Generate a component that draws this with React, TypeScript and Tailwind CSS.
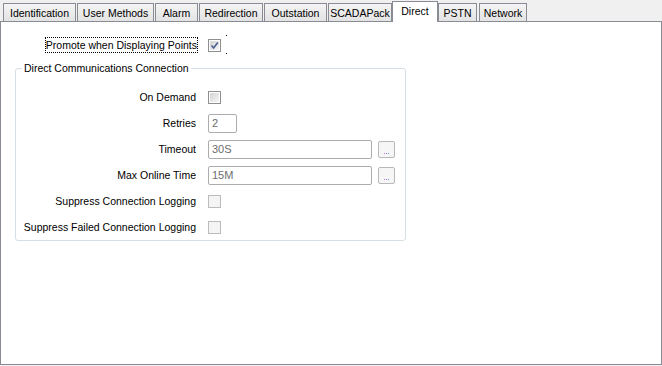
const tabs = [
  { name: "Identification", w: "w-[73px]", ml: "ml-0" },
  { name: "User Methods", w: "w-[77px]", ml: "ml-[1px]" },
  { name: "Alarm", w: "w-[43px]", ml: "ml-[1px]" },
  { name: "Redirection", w: "w-[64px]", ml: "ml-[1px]" },
  { name: "Outstation", w: "w-[63px]", ml: "ml-[1px]" },
  { name: "SCADAPack", w: "w-[64px]", ml: "ml-[1px]" },
  { name: "Direct", w: "w-[46px]", ml: "ml-0", active: true },
  { name: "PSTN", w: "w-[39px]", ml: "ml-0" },
  { name: "Network", w: "w-[48px]", ml: "ml-[2px]" },
];

function Check({ checked, dim }: { checked?: boolean; dim?: boolean }) {
  if (dim) {
    return <span className="block h-[13px] w-[13px] border border-[#bcbcbc] bg-[#f4f4f4]" />;
  }
  return (
    <span className="flex h-[13px] w-[13px] border border-[#8e8f8f] bg-white p-[1px]">
      <span className="relative flex flex-1 items-center justify-center bg-gradient-to-br from-[#d4d4d4] to-[#f6f6f6]">
        {checked && (
          <svg width="9" height="9" viewBox="0 0 9 9" className="absolute">
            <path d="M1.5 4.5 L3.6 7 L7.8 1.5" fill="none" stroke="#4b5f8f" strokeWidth="1.6" />
          </svg>
        )}
      </span>
    </span>
  );
}

function Field({ value, w }: { value: string; w: string }) {
  return (
    <span className={`flex h-[19px] ${w} items-center rounded-[2px] border border-[#acacac] bg-white pl-[3px] text-[11px] text-[#6d6d6d]`}>
      {value}
    </span>
  );
}

function Dots() {
  return (
    <span className="ml-[6px] flex h-[17px] w-[17px] items-end justify-center rounded-[2px] border border-[#b8b8b8] bg-[#f6f6f6] pb-[3px]">
      <span className="flex gap-[1px]">
        <span className="block h-px w-px bg-[#c07ad0]" />
        <span className="block h-px w-px bg-[#8a7bd0]" />
        <span className="block h-px w-px bg-[#6f9ad0]" />
      </span>
    </span>
  );
}

function Row({ label, children }: { label: string; children: React.ReactNode }) {
  return (
    <div className="flex h-[26px] items-center">
      <span className="w-[180px] whitespace-nowrap text-right">{label}</span>
      <div className="ml-[12px] flex items-center">{children}</div>
    </div>
  );
}

export default function App() {
  return (
    <div className="h-[366px] w-[662px] bg-[#f0f0f0] text-[10.5px] leading-[14px] text-black [font-family:'Liberation_Sans',Arial,sans-serif]">
      <div className="flex h-[21px] items-end pl-[3px]">
        {tabs.map((t) =>
          t.active ? (
            <div
              key={t.name}
              className={`relative z-10 -mb-px flex h-[21px] ${t.w} ${t.ml} items-start justify-center border border-b-0 border-[#898c95] bg-white pt-[2px]`}
            >
              {t.name}
            </div>
          ) : (
            <div
              key={t.name}
              className={`flex h-[18px] ${t.w} ${t.ml} items-center justify-center whitespace-nowrap border border-b-0 border-[#898c95] bg-gradient-to-b from-[#f4f4f4] to-[#e3e3e3]`}
            >
              {t.name}
            </div>
          )
        )}
      </div>

      <div className="h-[344px] border border-[#898c95] bg-white">
        <div className="mt-[15px] flex h-[16px] items-center">
          <div className="flex w-[197px] justify-end">
            <span className="whitespace-nowrap border border-dotted border-black">Promote when Displaying Points</span>
          </div>
          <span className="ml-[10px]">
            <Check checked />
          </span>
          <span className="-mt-[2px] ml-[5px] flex h-[19px] flex-col justify-between">
            <span className="block h-px w-px bg-black" />
            <span className="block h-px w-px bg-black" />
          </span>
        </div>

        <fieldset className="ml-[14px] mt-[8px] w-[391px] rounded-[3px] border border-[#d5dfe5] pb-0 pt-[9px]">
          <legend className="ml-[6px] px-[2px]">Direct Communications Connection</legend>
          <Row label="On Demand">
            <Check />
          </Row>
          <Row label="Retries">
            <Field value="2" w="w-[29px]" />
          </Row>
          <Row label="Timeout">
            <Field value="30S" w="w-[164px]" />
            <Dots />
          </Row>
          <Row label="Max Online Time">
            <Field value="15M" w="w-[164px]" />
            <Dots />
          </Row>
          <Row label="Suppress Connection Logging">
            <Check dim />
          </Row>
          <Row label="Suppress Failed Connection Logging">
            <Check dim />
          </Row>
        </fieldset>
      </div>
    </div>
  );
}
